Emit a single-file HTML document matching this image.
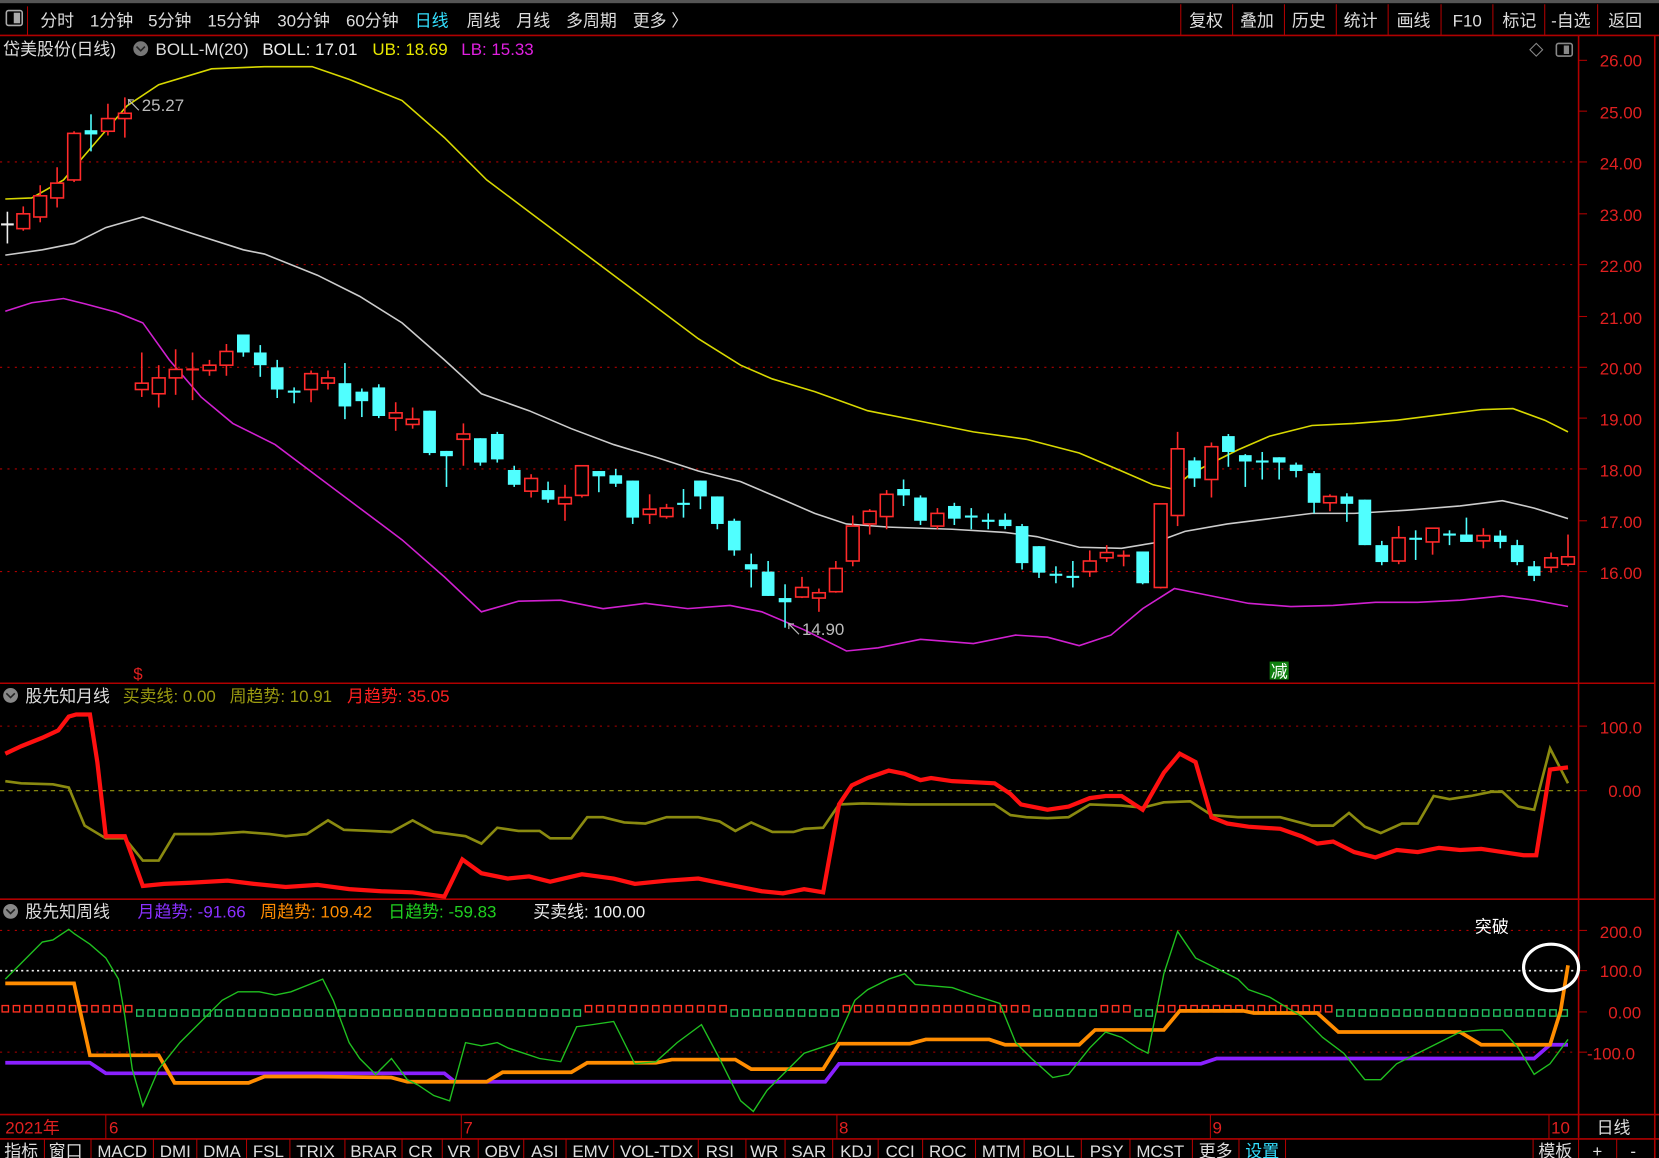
<!DOCTYPE html>
<html><head><meta charset="utf-8"><style>
html,body{margin:0;padding:0;background:#000;overflow:hidden}
svg{display:block}
text{font-family:"Liberation Sans","Noto Sans CJK SC",sans-serif;font-size:16px}
</style></head><body>
<svg id="s" width="1659" height="1158" viewBox="0 0 1568 1094" preserveAspectRatio="none" xmlns="http://www.w3.org/2000/svg">
<rect width="1568" height="1094" fill="#000"/>
<rect x="0" y="0" width="1568" height="3" fill="#555"/>
<line x1="0" y1="33.5" x2="1568" y2="33.5" stroke="#b00000" stroke-width="1.5"/>
<rect x="6" y="10" width="15" height="14" rx="2" fill="none" stroke="#aaa" stroke-width="1.5"/><rect x="13" y="12" width="6" height="10" fill="#aaa"/>
<line x1="26" y1="6" x2="26" y2="33" stroke="#b00000"/>
<g fill="#ddd">
<text x="38" y="25">分时</text><text x="85" y="25">1分钟</text><text x="140" y="25">5分钟</text><text x="196" y="25">15分钟</text><text x="262" y="25">30分钟</text><text x="327" y="25">60分钟</text><text x="392" y="25" fill="#33e0ff">日线</text><text x="441" y="25">周线</text><text x="488" y="25">月线</text><text x="535" y="25">多周期</text><text x="598" y="25">更多 〉</text>
<text x="1124" y="25">复权</text><text x="1172" y="25">叠加</text><text x="1221" y="25">历史</text><text x="1270" y="25">统计</text><text x="1320" y="25">画线</text><text x="1373" y="25">F10</text><text x="1420" y="25">标记</text><text x="1466" y="25">-自选</text><text x="1520" y="25">返回</text>
</g>
<g stroke="#b00000"><line x1="1116" y1="4" x2="1116" y2="33"/><line x1="1165" y1="4" x2="1165" y2="33"/><line x1="1214" y1="4" x2="1214" y2="33"/><line x1="1263" y1="4" x2="1263" y2="33"/><line x1="1312" y1="4" x2="1312" y2="33"/><line x1="1362" y1="4" x2="1362" y2="33"/><line x1="1411" y1="4" x2="1411" y2="33"/><line x1="1460" y1="4" x2="1460" y2="33"/><line x1="1510" y1="4" x2="1510" y2="33"/></g>
<g stroke="#b00000" stroke-width="1.5">
<line x1="1492" y1="34" x2="1492" y2="1075"/><line x1="1564" y1="34" x2="1564" y2="1094"/>
<line x1="0" y1="645.5" x2="1564" y2="645.5"/><line x1="0" y1="849.5" x2="1564" y2="849.5"/><line x1="0" y1="1053" x2="1568" y2="1053"/><line x1="0" y1="1076" x2="1568" y2="1076"/>
</g>
<g stroke="#b00000" stroke-dasharray="2,5" stroke-width="1">
<line x1="0" y1="153" x2="1490" y2="153"/><line x1="0" y1="250" x2="1490" y2="250"/><line x1="0" y1="347" x2="1490" y2="347"/><line x1="0" y1="443" x2="1490" y2="443"/><line x1="0" y1="540" x2="1490" y2="540"/>
<line x1="0" y1="686" x2="1490" y2="686"/>
<line x1="0" y1="879" x2="1490" y2="879"/><line x1="0" y1="994" x2="1490" y2="994"/>
</g>
<line x1="0" y1="747" x2="1490" y2="747" stroke="#9a9a10" stroke-dasharray="4,4"/>
<line x1="0" y1="917" x2="1490" y2="917" stroke="#eee" stroke-dasharray="2,3" stroke-width="1.5"/>
<g fill="#e02020" font-size="16">
<text x="1512" y="63">26.00</text><text x="1512" y="112">25.00</text><text x="1512" y="160">24.00</text><text x="1512" y="209">23.00</text><text x="1512" y="257">22.00</text><text x="1512" y="306">21.00</text><text x="1512" y="354">20.00</text><text x="1512" y="402">19.00</text><text x="1512" y="450">18.00</text><text x="1512" y="499">17.00</text><text x="1512" y="547">16.00</text>
<text x="1512" y="693">100.0</text><text x="1520" y="753">0.00</text>
<text x="1512" y="886">200.0</text><text x="1512" y="923">100.0</text><text x="1520" y="962">0.00</text><text x="1500" y="1001">-100.0</text>
</g>
<g stroke="#b00000"><line x1="1492" y1="57" x2="1500" y2="57"/><line x1="1492" y1="105" x2="1500" y2="105"/><line x1="1492" y1="153" x2="1500" y2="153"/><line x1="1492" y1="202" x2="1500" y2="202"/><line x1="1492" y1="250" x2="1500" y2="250"/><line x1="1492" y1="299" x2="1500" y2="299"/><line x1="1492" y1="347" x2="1500" y2="347"/><line x1="1492" y1="395" x2="1500" y2="395"/><line x1="1492" y1="443" x2="1500" y2="443"/><line x1="1492" y1="492" x2="1500" y2="492"/><line x1="1492" y1="540" x2="1500" y2="540"/><line x1="1492" y1="686" x2="1500" y2="686"/><line x1="1492" y1="747" x2="1500" y2="747"/><line x1="1492" y1="879" x2="1500" y2="879"/><line x1="1492" y1="917" x2="1500" y2="917"/><line x1="1492" y1="956" x2="1500" y2="956"/><line x1="1492" y1="994" x2="1500" y2="994"/></g>
<text x="3" y="52" fill="#ddd">岱美股份(日线)</text>
<circle cx="133" cy="46" r="7" fill="#777"/><path d="M129 44 L133 48 L137 44" stroke="#222" fill="none" stroke-width="1.5"/>
<text x="147" y="52" fill="#ddd">BOLL-M(20)</text><text x="248" y="52" fill="#eee">BOLL: 17.01</text><text x="352" y="52" fill="#e8e800">UB: 18.69</text><text x="436" y="52" fill="#e020e0">LB: 15.33</text>
<path d="M1452 41 L1458 47 L1452 53 L1446 47 Z" fill="none" stroke="#888"/>
<rect x="1471" y="41" width="15" height="12" rx="2" fill="none" stroke="#888" stroke-width="1.5"/><rect x="1478" y="43" width="5" height="8" fill="#888"/>
<polyline fill="none" stroke="#d8d800" stroke-width="1.5" points="5,188 30,187 60,170 90,135 120,100 150,80 200,65 250,63 295,63 330,75 380,95 420,130 460,170 500,200 540,230 580,260 620,290 660,320 700,345 730,358 770,370 820,388 870,398 920,408 970,415 1020,428 1060,445 1090,458 1108,462 1125,448 1140,440 1170,425 1200,412 1240,402 1280,400 1320,397 1360,392 1400,387 1430,386 1460,397 1482,408"/>
<polyline fill="none" stroke="#ccc" stroke-width="1.5" points="5,241 40,236 70,230 100,215 135,205 180,220 230,236 250,240 300,260 340,280 380,305 420,340 455,372 500,388 540,405 580,420 620,432 660,445 700,455 740,472 770,485 800,495 840,498 900,500 950,503 980,507 1020,517 1060,518 1090,513 1120,502 1160,495 1200,490 1240,485 1280,485 1330,482 1380,478 1420,473 1450,480 1482,490"/>
<polyline fill="none" stroke="#d020d0" stroke-width="1.5" points="5,294 30,286 60,282 80,287 110,295 135,305 160,340 190,375 220,400 260,420 300,450 340,480 380,510 420,545 455,578 490,568 530,567 570,575 610,570 650,575 690,572 720,578 760,595 800,615 830,612 870,604 920,608 960,600 990,602 1020,610 1050,600 1080,575 1110,556 1140,562 1180,570 1220,573 1260,572 1300,569 1340,569 1380,567 1420,563 1450,567 1482,573"/>
<g id="candles"></g>
<text x="118" y="105" fill="#bbb">↖25.27</text>
<text x="742" y="600" fill="#bbb">↖14.90</text>
<text x="126" y="642" fill="#e02020" font-size="13">$</text>
<rect x="1200" y="625" width="18" height="17" fill="#108010"/><text x="1201" y="640" fill="#fff" font-size="15">减</text>
<circle cx="10" cy="657" r="7" fill="#888"/><path d="M6 655 L10 659 L14 655" stroke="#222" fill="none" stroke-width="1.5"/>
<text x="24" y="663" fill="#ddd">股先知月线</text><text x="116" y="663" fill="#9a9a10">买卖线: 0.00</text><text x="217" y="663" fill="#9a9a10">周趋势: 10.91</text><text x="328" y="663" fill="#ff2020">月趋势: 35.05</text>
<polyline fill="none" stroke="#8a8a10" stroke-width="2.5" points="5,738 20,740 50,741 65,744 80,780 100,792 118,792 135,813 150,813 165,788 200,788 230,786 255,788 270,790 290,788 310,775 325,784 350,785 370,786 390,775 410,786 440,790 455,797 470,782 490,785 510,785 520,792 540,792 555,772 570,772 590,777 610,778 630,772 660,772 680,776 695,785 710,777 730,786 750,786 760,783 778,782 793,760 815,759 860,760 940,760 955,770 970,772 990,773 1010,772 1030,760 1060,761 1080,763 1100,758 1125,757 1145,770 1170,772 1210,772 1240,780 1260,780 1275,768 1290,781 1305,787 1325,778 1340,778 1355,752 1370,755 1390,752 1410,748 1420,748 1435,762 1450,765 1465,707 1482,740"/>
<polyline fill="none" stroke="#ff1010" stroke-width="4" points="5,712 20,705 40,697 55,690 65,677 72,675 85,675 92,720 100,790 118,790 135,837 155,835 180,834 215,832 240,835 270,838 300,836 330,840 360,842 390,843 420,847 437,812 455,825 480,830 500,828 520,833 550,826 580,830 600,835 630,832 660,830 690,836 720,842 740,844 760,840 778,843 793,760 805,742 820,735 840,728 855,731 870,737 880,735 900,738 940,740 955,750 965,760 990,765 1010,762 1030,754 1045,752 1060,752 1080,765 1100,730 1115,712 1130,720 1145,772 1160,778 1180,781 1210,783 1230,790 1245,797 1260,795 1280,805 1300,810 1320,803 1340,805 1360,801 1380,803 1400,802 1420,805 1440,808 1452,808 1465,727 1482,725"/>
<circle cx="10" cy="861" r="7" fill="#888"/><path d="M6 859 L10 863 L14 859" stroke="#222" fill="none" stroke-width="1.5"/>
<text x="24" y="867" fill="#ddd">股先知周线</text><text x="130" y="867" fill="#8a30ff">月趋势: -91.66</text><text x="246" y="867" fill="#ff8c00">周趋势: 109.42</text><text x="367" y="867" fill="#20d020">日趋势: -59.83</text><text x="504" y="867" fill="#eee">买卖线: 100.00</text>
<g id="sq"></g>
<polyline fill="none" stroke="#8a20ff" stroke-width="3.5" points="5,1004 85,1004 100,1014 420,1014 430,1022 780,1022 793,1005 1135,1005 1150,1000 1450,1000 1465,987 1482,987"/>
<polyline fill="none" stroke="#ff8c00" stroke-width="3.5" points="5,929 70,929 85,997 150,997 165,1023 235,1023 250,1017 300,1017 370,1018 385,1022 460,1022 475,1013 540,1013 555,1004 620,1004 635,1001 695,1001 710,1010 778,1010 793,986 860,986 875,982 935,982 950,987 1020,987 1035,973 1100,973 1115,955 1175,955 1185,957 1245,957 1265,975 1380,975 1400,987 1465,987 1475,955 1482,912"/>
<polyline fill="none" stroke="#20c020" stroke-width="1.3" points="5,925 20,910 40,890 50,888 65,878 70,882 85,892 100,905 112,925 118,960 125,1010 135,1045 150,1010 170,985 190,965 210,945 225,937 245,937 260,940 275,937 295,929 305,925 315,945 330,985 340,1000 355,1015 370,1000 385,1020 395,1025 410,1035 425,1040 440,985 455,988 470,985 480,990 495,995 510,1000 530,1003 545,970 560,968 580,965 600,1005 620,1003 640,985 663,968 680,1000 700,1040 712,1050 725,1030 745,1010 760,995 775,990 790,985 808,945 820,935 840,925 855,920 865,930 900,933 920,940 945,948 960,985 975,1000 995,1018 1010,1015 1030,990 1045,975 1060,980 1075,990 1085,995 1100,920 1113,880 1130,905 1150,915 1170,925 1180,935 1200,942 1230,960 1250,980 1270,995 1290,1020 1305,1020 1320,1005 1340,995 1360,985 1380,975 1400,973 1420,973 1435,990 1450,1015 1465,1005 1482,982"/>
<text x="1394" y="881" fill="#fff" font-size="26">突破</text>
<ellipse cx="1466" cy="914" rx="26" ry="22" fill="none" stroke="#fff" stroke-width="3"/>
<g fill="#e02020"><text x="5" y="1071">2021年</text><text x="103" y="1071">6</text><text x="438" y="1071">7</text><text x="793" y="1071">8</text><text x="1146" y="1071">9</text><text x="1466" y="1071">10</text></g>
<g stroke="#b00000"><line x1="100" y1="1053" x2="100" y2="1076"/><line x1="436" y1="1053" x2="436" y2="1076"/><line x1="791" y1="1053" x2="791" y2="1076"/><line x1="1144" y1="1053" x2="1144" y2="1076"/><line x1="1464" y1="1053" x2="1464" y2="1076"/></g>
<text x="1509" y="1071" fill="#ddd">日线</text>
<g fill="#ddd"><text x="4" y="1093">指标</text><text x="46" y="1093">窗口</text><text x="92" y="1093">MACD</text><text x="151" y="1093">DMI</text><text x="192" y="1093">DMA</text><text x="239" y="1093">FSL</text><text x="280" y="1093">TRIX</text><text x="331" y="1093">BRAR</text><text x="386" y="1093">CR</text><text x="423" y="1093">VR</text><text x="458" y="1093">OBV</text><text x="502" y="1093">ASI</text><text x="541" y="1093">EMV</text><text x="586" y="1093">VOL-TDX</text><text x="667" y="1093">RSI</text><text x="709" y="1093">WR</text><text x="748" y="1093">SAR</text><text x="794" y="1093">KDJ</text><text x="837" y="1093">CCI</text><text x="878" y="1093">ROC</text><text x="928" y="1093">MTM</text><text x="975" y="1093">BOLL</text><text x="1030" y="1093">PSY</text><text x="1074" y="1093">MCST</text><text x="1133" y="1093">更多</text><text x="1177" y="1093" fill="#33e0ff">设置</text><text x="1454" y="1093">模板</text><text x="1505" y="1093">+</text><text x="1541" y="1093">-</text></g>
<g stroke="#b00000"><line x1="42" y1="1076" x2="42" y2="1094"/><line x1="86" y1="1076" x2="86" y2="1094"/><line x1="145" y1="1076" x2="145" y2="1094"/><line x1="186" y1="1076" x2="186" y2="1094"/><line x1="233" y1="1076" x2="233" y2="1094"/><line x1="274" y1="1076" x2="274" y2="1094"/><line x1="326" y1="1076" x2="326" y2="1094"/><line x1="380" y1="1076" x2="380" y2="1094"/><line x1="418" y1="1076" x2="418" y2="1094"/><line x1="452" y1="1076" x2="452" y2="1094"/><line x1="495" y1="1076" x2="495" y2="1094"/><line x1="535" y1="1076" x2="535" y2="1094"/><line x1="580" y1="1076" x2="580" y2="1094"/><line x1="660" y1="1076" x2="660" y2="1094"/><line x1="705" y1="1076" x2="705" y2="1094"/><line x1="742" y1="1076" x2="742" y2="1094"/><line x1="787" y1="1076" x2="787" y2="1094"/><line x1="830" y1="1076" x2="830" y2="1094"/><line x1="872" y1="1076" x2="872" y2="1094"/><line x1="922" y1="1076" x2="922" y2="1094"/><line x1="968" y1="1076" x2="968" y2="1094"/><line x1="1022" y1="1076" x2="1022" y2="1094"/><line x1="1068" y1="1076" x2="1068" y2="1094"/><line x1="1127" y1="1076" x2="1127" y2="1094"/><line x1="1171" y1="1076" x2="1171" y2="1094"/><line x1="1215" y1="1076" x2="1215" y2="1094"/><line x1="1449" y1="1076" x2="1449" y2="1094"/><line x1="1492" y1="1076" x2="1492" y2="1094"/><line x1="1528" y1="1076" x2="1528" y2="1094"/></g>
</svg>
<script>
var NS="http://www.w3.org/2000/svg";
function el(p,t,a){var e=document.createElementNS(NS,t);for(var k in a)e.setAttribute(k,a[k]);p.appendChild(e);return e;}
var C=[[7,212,212,200,230,'w'],[22,202,216,195,218,'u'],[38,185,205,175,210,'u'],[54,173,187,158,196,'u'],[70,126,170,124,172,'u'],[86,123,127,108,143,'d'],[102,112,124,98,128,'u'],[118,107,112,92,130,'u'],[134,362,368,333,375,'u'],[150,357,372,345,385,'u'],[166,349,357,330,373,'u'],[182,349,350,333,378,'u'],[198,345,350,340,355,'u'],[214,332,345,325,355,'u'],[230,316,333,316,337,'d'],[246,333,345,326,356,'d'],[262,347,368,340,376,'d'],[278,370,370,366,381,'d'],[294,353,368,350,380,'u'],[310,357,362,350,368,'u'],[326,362,384,343,396,'d'],[342,370,379,367,394,'d'],[358,366,393,363,395,'d'],[374,390,395,380,407,'u'],[390,396,401,385,405,'u'],[406,388,428,388,430,'d'],[422,426,431,426,460,'d'],[438,410,415,400,440,'u'],[454,414,437,414,440,'d'],[470,410,434,408,437,'d'],[486,444,458,440,460,'d'],[502,452,464,448,470,'u'],[518,463,472,455,475,'d'],[534,470,476,458,492,'u'],[550,440,468,440,470,'u'],[566,445,450,445,465,'d'],[582,449,457,443,460,'d'],[598,454,489,454,495,'d'],[614,481,486,467,495,'u'],[630,480,488,476,490,'u'],[646,476,476,462,489,'d'],[662,454,469,454,481,'d'],[678,469,495,469,500,'d'],[694,492,520,490,525,'d'],[710,533,538,523,555,'d'],[726,540,563,530,563,'d'],[742,565,569,552,593,'d'],[758,555,564,545,565,'u'],[774,560,565,556,578,'u'],[790,537,559,530,560,'u'],[806,497,530,487,535,'u'],[822,483,495,481,505,'u'],[838,467,488,463,500,'u'],[854,462,468,453,478,'d'],[870,470,492,468,496,'d'],[886,485,497,480,500,'u'],[902,478,490,475,496,'d'],[918,488,488,480,500,'d'],[934,492,492,485,500,'d'],[950,491,497,485,500,'d'],[966,497,532,495,538,'d'],[982,516,541,516,546,'d'],[998,543,543,535,551,'d'],[1014,545,545,530,555,'d'],[1030,530,540,520,545,'u'],[1046,522,527,515,531,'u'],[1062,525,526,520,535,'u'],[1080,521,551,521,552,'d'],[1097,476,555,476,556,'u'],[1113,424,487,408,497,'u'],[1129,435,452,432,460,'d'],[1145,422,453,418,470,'u'],[1161,412,427,410,441,'d'],[1177,430,436,429,460,'d'],[1193,436,436,427,453,'d'],[1209,432,437,432,453,'d'],[1225,439,445,437,451,'d'],[1242,447,475,445,485,'d'],[1257,469,475,467,483,'u'],[1273,469,476,466,493,'d'],[1290,472,515,472,515,'d'],[1306,515,531,511,534,'d'],[1322,508,530,497,533,'u'],[1338,509,509,501,529,'d'],[1354,499,512,499,524,'u'],[1370,505,505,501,515,'d'],[1386,505,512,489,512,'d'],[1402,506,511,499,518,'u'],[1418,506,512,501,518,'d'],[1434,515,531,510,534,'d'],[1450,535,544,530,549,'d'],[1466,527,536,522,541,'u'],[1482,526,533,505,535,'u']];
var g=document.getElementById('candles');
C.forEach(function(c){var x=c[0],col=c[5]=='u'?'#ff2a2a':(c[5]=='d'?'#50ffff':'#eee');
var w=6;
el(g,'line',{x1:x,y1:c[3],x2:x,y2:c[4],stroke:col,'stroke-width':1.5});
if(c[2]-c[1]<1.5){el(g,'line',{x1:x-w,y1:c[1],x2:x+w,y2:c[1],stroke:col,'stroke-width':2});}
else if(c[5]=='u'){el(g,'rect',{x:x-w,y:c[1],width:2*w,height:c[2]-c[1],fill:'#000',stroke:col,'stroke-width':1.5});}
else{el(g,'rect',{x:x-w,y:c[1],width:2*w,height:c[2]-c[1],fill:col});}
});
var s=document.getElementById('sq');
var red=[[0,120],[545,685],[790,970],[1040,1065],[1090,1262]];
function isRed(x){for(var i=0;i<red.length;i++)if(x>=red[i][0]&&x<=red[i][1])return true;return false;}
for(var x=2;x<1485;x+=10.6){var r=isRed(x);el(s,'rect',{x:x,y:r?950:954,width:6,height:6,fill:'none',stroke:r?'#ff3020':'#20c060','stroke-width':1.3});}
</script>
</body></html>
